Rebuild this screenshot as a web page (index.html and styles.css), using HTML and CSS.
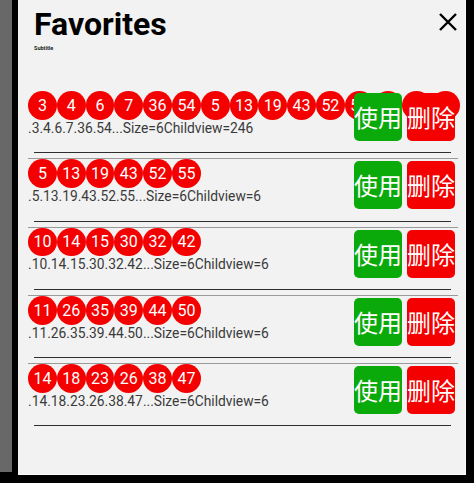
FILE: index.html
```html
<!DOCTYPE html>
<html lang="zh-cn">
<head>
<meta charset="UTF-8">
<meta name="viewport" content="width=device-width, initial-scale=1.0">
<title>Favorites</title>
<link rel="stylesheet" href="styles.css">
</head>
<body>
    <div class="screen">
        <div class="backdrop"></div>

        <div class="dialog">
            <div class="header">
                <div class="titles">
                    <h1>Favorites</h1>
                    <p class="subtitle">Subtitle</p>
                </div>
                <button class="closeButton" aria-label="close">
                    <svg width="18" height="18" viewBox="0 0 18 18">
                        <path d="M1 1 L17 17 M17 1 L1 17" stroke="#000" stroke-width="2.4" fill="none"/>
                    </svg>
                </button>
            </div>

            <ul class="favList">
                <li class="favItem">
                    <div class="balls">
                        <span class="ball">3</span><span class="ball">4</span><span class="ball">6</span><span class="ball">7</span><span class="ball">36</span><span class="ball">54</span><span class="ball">5</span><span class="ball">13</span><span class="ball">19</span><span class="ball">43</span><span class="ball">52</span><span class="ball">55</span><span class="ball"></span><span class="ball"></span><span class="ball"></span>
                    </div>
                    <p class="info">.3.4.6.7.36.54...Size=6Childview=246</p>
                    <div class="itemLine"></div>
                    <div class="actions">
                        <button class="useButton">使用</button>
                        <button class="deleteButton">删除</button>
                    </div>
                </li>
                <li class="favItem">
                    <div class="balls">
                        <span class="ball">5</span><span class="ball">13</span><span class="ball">19</span><span class="ball">43</span><span class="ball">52</span><span class="ball">55</span>
                    </div>
                    <p class="info">.5.13.19.43.52.55...Size=6Childview=6</p>
                    <div class="itemLine"></div>
                    <div class="actions">
                        <button class="useButton">使用</button>
                        <button class="deleteButton">删除</button>
                    </div>
                </li>
                <li class="favItem">
                    <div class="balls">
                        <span class="ball">10</span><span class="ball">14</span><span class="ball">15</span><span class="ball">30</span><span class="ball">32</span><span class="ball">42</span>
                    </div>
                    <p class="info">.10.14.15.30.32.42...Size=6Childview=6</p>
                    <div class="itemLine"></div>
                    <div class="actions">
                        <button class="useButton">使用</button>
                        <button class="deleteButton">删除</button>
                    </div>
                </li>
                <li class="favItem">
                    <div class="balls">
                        <span class="ball">11</span><span class="ball">26</span><span class="ball">35</span><span class="ball">39</span><span class="ball">44</span><span class="ball">50</span>
                    </div>
                    <p class="info">.11.26.35.39.44.50...Size=6Childview=6</p>
                    <div class="itemLine"></div>
                    <div class="actions">
                        <button class="useButton">使用</button>
                        <button class="deleteButton">删除</button>
                    </div>
                </li>
                <li class="favItem">
                    <div class="balls">
                        <span class="ball">14</span><span class="ball">18</span><span class="ball">23</span><span class="ball">26</span><span class="ball">38</span><span class="ball">47</span>
                    </div>
                    <p class="info">.14.18.23.26.38.47...Size=6Childview=6</p>
                    <div class="itemLine"></div>
                    <div class="actions">
                        <button class="useButton">使用</button>
                        <button class="deleteButton">删除</button>
                    </div>
                </li>
            </ul>
        </div>
    </div>
</body>
</html>
```

FILE: styles.css
```css
body {
    margin: 0;
    background-color: #000;
    font-family: Roboto, "Noto Sans", sans-serif;
}

.screen {
    display: flex;
    align-items: flex-start;
    gap: 6px;
    height: 483px;
    overflow: hidden;
}

.backdrop {
    flex-shrink: 0;
    width: 12px;
    height: 472px;
    background-color: #686868;
}

.dialog {
    flex-shrink: 0;
    box-sizing: border-box;
    width: 448px;
    height: 475px;
    padding: 5px 7px 0 10px;
    background-color: #f2f2f2;
    border-right: 1px solid #fbfbfb;
    border-bottom: 1px solid #fbfbfb;
}

.header {
    display: flex;
    justify-content: space-between;
    align-items: flex-start;
    padding-left: 6px;
}

h1 {
    margin: 0;
    font-size: 32px;
    line-height: 38px;
    font-weight: 700;
    color: #000;
}

.subtitle {
    margin: 2px 0 0 0;
    font-size: 5.5px;
    line-height: 7px;
    font-weight: 700;
    color: #222;
}

.closeButton {
    margin: 8px 1px 0 0;
    padding: 0;
    width: 18px;
    height: 18px;
    border: none;
    background: none;
}

.closeButton svg {
    display: block;
}

.favList {
    list-style: none;
    margin: 39px 0 0 0;
    padding: 0;
}

.favItem {
    position: relative;
    height: 67.3px;
}

.favItem + .favItem {
    border-top: 1px solid #9a9a9a;
}

.balls {
    display: flex;
    height: 28.8px;
}

.ball {
    flex-shrink: 0;
    display: flex;
    justify-content: center;
    align-items: center;
    width: 28.8px;
    height: 28.8px;
    border-radius: 50%;
    background-color: #f50000;
    color: #fff;
    font-size: 16px;
}

.info {
    margin: 0;
    font-size: 13.8px;
    line-height: 17px;
    color: #3a3a3a;
    white-space: nowrap;
}

.itemLine {
    height: 1px;
    margin: 15.5px 7px 0 6px;
    background-color: #2e2e2e;
}

/* botoes por cima das bolas */
.actions {
    position: absolute;
    top: 2px;
    right: 3px;
    display: flex;
    gap: 5px;
}

.useButton,
.deleteButton {
    display: flex;
    justify-content: center;
    align-items: center;
    width: 48px;
    height: 48px;
    padding: 0;
    border: none;
    border-radius: 5px;
    color: #fff;
    font-family: "Noto Sans CJK SC", sans-serif;
    font-size: 24px;
    line-height: 1;
}

.useButton {
    background-color: #0aaa0a;
}

.deleteButton {
    background-color: #f50000;
}
```
